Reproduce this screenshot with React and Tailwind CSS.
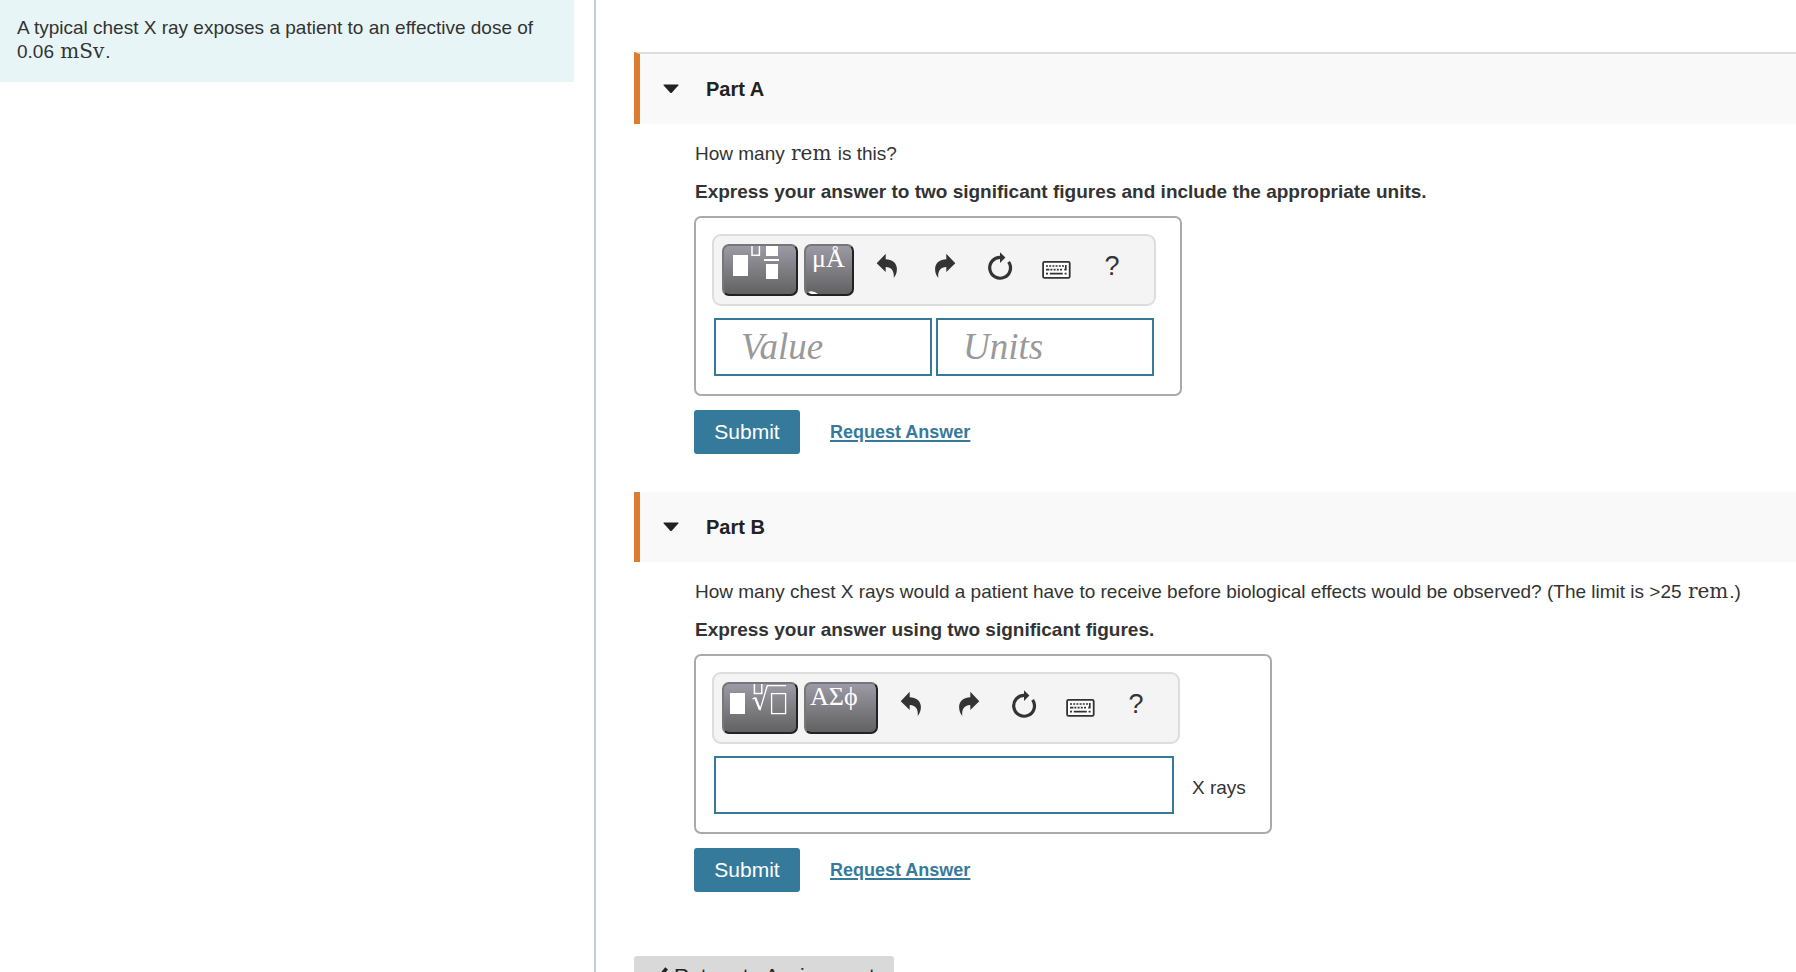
import { useState } from 'react';

const Unit = ({ children }) => (
  <span className="mx-px font-['DejaVu_Serif',serif] text-[20px] leading-5">{children}</span>
);

const UndoIcon = ({ flip }) => (
  <svg viewBox="0 0 56 52" className={flip ? 'size-full -scale-x-100' : 'size-full'} fill="#333">
    <path d="M16.7 19.3 L25.7 9.8 V15.2 C32 15.4 36.6 18.6 36.9 24.6 C37 28.6 35.8 31.6 33.7 34 C34.4 27.6 32.2 23.2 25.7 22.9 V28 Z" />
  </svg>
);

const ResetIcon = () => (
  <svg viewBox="0 0 56 52" className="size-full">
    <path d="M36.6 17.8 A10.4 10.4 0 1 1 28.6 13.4" fill="none" stroke="#333" strokeWidth="3.2" />
    <path d="M28 8.3 L33.4 13.5 L28 19 Z" fill="#333" />
  </svg>
);

const KeyboardIcon = () => (
  <svg viewBox="0 0 56 52" className="size-full">
    <rect x="15.1" y="17.9" width="26.6" height="16" rx="1.4" fill="#fff" stroke="#333" strokeWidth="1.8" />
    <path
      d="M18 22h2m1.2 0h2m1.2 0h2m1.2 0h2m1.2 0h2m1.2 0h2M18 25.7h3.4m1 0h2m1.2 0h2m1.2 0h2m1.2 0h2M18 29.6h2m1.8 0h13m1.8 0h2M36.2 25.7h2.4M37.8 21v5.4"
      fill="none"
      stroke="#333"
      strokeWidth="1.7"
    />
  </svg>
);

// exponent and fraction boxes
const FractionTemplates = () => (
  <svg viewBox="0 0 72 48" className="size-full">
    <g fill="#fff">
      <rect x="9" y="9" width="15" height="21" />
      <rect x="42" y="0" width="12" height="10" />
      <rect x="40" y="13" width="15" height="2" />
      <rect x="42" y="18" width="12" height="15" />
    </g>
    <path d="M28 0V9.3H35.4V0" fill="none" stroke="#fff" strokeWidth="1.5" />
  </svg>
);

// filled box and n-th root
const RootTemplates = () => (
  <svg viewBox="0 0 72 48" className="size-full" fill="none" stroke="#fff">
    <rect x="6" y="9" width="15" height="21" fill="#fff" stroke="none" />
    <path d="M30.4 0V9.6H37.8V0" strokeWidth="1.5" />
    <path d="M28.5 15L31.2 13.6" strokeWidth="1.3" />
    <path d="M31.2 13.6L35.9 25.6" strokeWidth="2.4" />
    <path d="M35.9 26.4L43.3 1.7H62" strokeWidth="1.3" />
    <rect x="47.6" y="9.6" width="14" height="20" strokeWidth="1.3" />
  </svg>
);

const PaletteButton = ({ label, className, children }) => (
  <button
    type="button"
    aria-label={label}
    className={`h-[52px] shrink-0 overflow-hidden rounded-[7px] border-2 border-t-[#777] border-l-[#777] border-r-[#222] border-b-[#222] bg-linear-to-b from-[#9c9aa5] to-[#626262] text-left text-white ${className}`}
  >
    {children}
  </button>
);

const IconButton = ({ label, children }) => (
  <button type="button" aria-label={label} className="h-[52px] w-14 shrink-0 text-[#333]">
    {children}
  </button>
);

const Toolbar = ({ children }) => (
  <div className="flex w-fit rounded-[9px] border-2 border-[#ddd] bg-[#f4f4f4] py-2 pr-[14px] pl-2">
    <div className="mr-1.5 flex gap-1.5">{children}</div>
    <IconButton label="Undo"><UndoIcon /></IconButton>
    <IconButton label="Redo"><UndoIcon flip /></IconButton>
    <IconButton label="Reset"><ResetIcon /></IconButton>
    <IconButton label="Keyboard shortcuts"><KeyboardIcon /></IconButton>
    <IconButton label="Help">
      <span className="block pb-2 text-[27px] leading-9">?</span>
    </IconButton>
  </div>
);

const AnswerInput = ({ label, placeholder, className }) => {
  const [value, setValue] = useState('');

  return (
    <input
      type="text"
      aria-label={label}
      placeholder={placeholder}
      value={value}
      onChange={(e) => setValue(e.target.value)}
      className={`h-[58px] border-2 border-[#367a9b] bg-white px-[25px] pb-0.5 font-['Liberation_Serif',serif] text-[37px] text-[#333] italic placeholder:text-[#999] focus:outline-none ${className}`}
    />
  );
};

const Part = ({ title, first, question, instruction, children }) => {
  const [open, setOpen] = useState(true);

  return (
    <section className="mb-[38px]">
      <h2
        className={`border-l-[6px] border-l-[#dd7c2f] bg-[#f9f9f9] ${first ? 'border-t-2 border-t-[#ddd]' : ''}`}
      >
        <button
          type="button"
          aria-expanded={open}
          onClick={() => setOpen(!open)}
          className="flex h-[70px] w-full items-center pl-[23px] text-left text-[20px] font-bold text-[#222]"
        >
          <svg viewBox="0 0 16 10" className="mr-[27px] h-[10px] w-4" fill="#222">
            <path d="M1 0.5H15Q16 0.7 15.3 1.6L9 8.4Q8 9.4 7 8.4L0.7 1.6Q0 0.7 1 0.5Z" />
          </svg>
          {title}
        </button>
      </h2>
      {open && (
        <form className="pl-[60px]" onSubmit={(e) => e.preventDefault()}>
          <p className="pt-[18px] pl-px">{question}</p>
          <p className="mt-[14px] pl-px font-bold">{instruction}</p>
          <div className="mt-3 w-fit rounded-[7px] border-2 border-[#aaa] px-4 pt-4 pb-[18px]">{children}</div>
          <div className="mt-[14px] flex items-center gap-[30px]">
            <button type="submit" className="h-11 w-[106px] rounded-[3px] bg-[#367a9b] text-[21px] text-white">
              Submit
            </button>
            <a
              href="#request"
              className="text-[18px] font-bold text-[#367a9b] underline decoration-2 underline-offset-2"
            >
              Request Answer
            </a>
          </div>
        </form>
      )}
    </section>
  );
};

export default function App() {
  return (
    <div className="flex h-screen overflow-hidden bg-white font-['Liberation_Sans',Arial,sans-serif] text-[19px] leading-6 text-[#333]">
      <aside className="w-[594px] shrink-0 pr-5">
        <p className="bg-[#e8f5f6] pt-4 pr-4 pb-[18px] pl-[17px]">
          A typical chest X ray exposes a patient to an effective dose of 0.06 <Unit>mSv</Unit>.
        </p>
      </aside>

      <main className="min-w-0 flex-1 overflow-hidden border-l-2 border-[#c0cce0] pt-[52px] pl-[38px]">
        <Part
          first
          title="Part A"
          question={<>How many <Unit>rem</Unit> is this?</>}
          instruction="Express your answer to two significant figures and include the appropriate units."
        >
          <Toolbar>
            <PaletteButton label="Templates" className="w-[76px]">
              <FractionTemplates />
            </PaletteButton>
            <PaletteButton label="Units symbols" className="relative w-[50px] pl-1.5">
              <span className="block h-full font-['Liberation_Serif',serif] text-[26px] leading-[26px]">μÅ</span>
              <svg viewBox="0 0 10 3" className="absolute bottom-0 left-0.5 h-[3px] w-[10px]" fill="#fff">
                <path d="M0 1Q5 -1 10 3H3Z" />
              </svg>
            </PaletteButton>
          </Toolbar>
          <div className="mt-3 flex gap-1 pr-2.5 pl-0.5">
            <AnswerInput label="Value" placeholder="Value" className="w-[218px]" />
            <AnswerInput label="Units" placeholder="Units" className="w-[218px]" />
          </div>
        </Part>

        <Part
          title="Part B"
          question={
            <>
              How many chest X rays would a patient have to receive before biological effects would be observed? (The
              limit is &gt;25 <Unit>rem</Unit>.)
            </>
          }
          instruction="Express your answer using two significant figures."
        >
          <Toolbar>
            <PaletteButton label="Templates" className="w-[76px]">
              <RootTemplates />
            </PaletteButton>
            <PaletteButton label="Greek symbols" className="w-[74px] pl-1">
              <span className="block h-full font-['Liberation_Serif',serif] text-[26px] leading-[26px]">ΑΣϕ</span>
            </PaletteButton>
          </Toolbar>
          <div className="mt-3 flex items-center gap-[18px] pr-2 pl-0.5">
            <AnswerInput label="Number of X rays" className="w-[460px]" />
            <span className="pt-1.5">X rays</span>
          </div>
        </Part>

        <button
          type="button"
          className="mt-16 flex h-10 w-[260px] items-center gap-1.5 rounded-[3px] bg-[#d9d9d9] pl-6 text-[21px] text-[#222]"
        >
          <svg viewBox="0 0 10 18" className="h-[18px] w-[10px]" fill="none" stroke="#222" strokeWidth="3.6">
            <path d="M8.6 1.4L2.4 9L8.6 16.6" />
          </svg>
          Return to Assignment
        </button>
      </main>
    </div>
  );
}
